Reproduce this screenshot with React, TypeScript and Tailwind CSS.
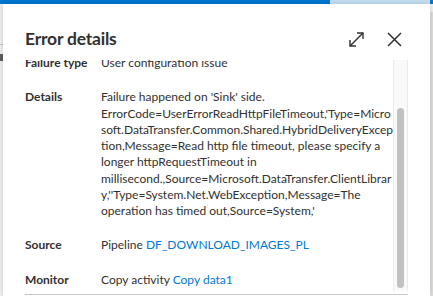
import React from "react";

const font = { fontFamily: 'Lato, "Open Sans", sans-serif' };

function Row({ label, children }: { label: string; children: React.ReactNode }) {
  return (
    <div className="flex">
      <div className="w-[76px] shrink-0 font-bold text-[#323130]">{label}</div>
      <div className="flex-1 text-[#323130]">{children}</div>
    </div>
  );
}

export default function App() {
  const detailLines = [
    "Failure happened on 'Sink' side.",
    "ErrorCode=UserErrorReadHttpFileTimeout,'Type=Micro",
    "soft.DataTransfer.Common.Shared.HybridDeliveryExcep",
    "tion,Message=Read http file timeout, please specify a",
    "longer httpRequestTimeout in",
    "millisecond.,Source=Microsoft.DataTransfer.ClientLibrar",
    "y,''Type=System.Net.WebException,Message=The",
    "operation has timed out,Source=System,'",
  ];
  return (
    <div className="relative w-[433px] h-[296px] overflow-hidden bg-[#f3f2f1]" style={font}>
      {/* page behind */}
      <div className="flex h-[4px]">
        <div className="flex-1 bg-[#0078d4]" />
        <div className="w-[100px] bg-[#c7e0f4]" />
        <div className="w-[3px] bg-[#0078d4]" />
      </div>
      <div className="absolute left-0 top-[44px] w-[3px] h-px bg-[#c8c6c4]" />
      <div className="absolute left-0 top-[54px] w-[3px] h-[7px] bg-[#605e5c]" />
      <div className="absolute right-0 top-[12px] w-[3px] bottom-0 bg-[#e1dfdd]" />

      {/* dialog */}
      <div className="absolute left-[3px] top-[4px] right-[3px] bottom-0 bg-white shadow-[0_0_6px_rgba(0,0,0,0.18)] flex flex-col">
        <div className="flex items-center h-[56px] pl-[22px] pr-[28px] pt-[14px]">
          <div className="flex-1 text-[17.5px] font-bold text-[#323130] tracking-[-0.2px]">Error details</div>
          <svg width="15" height="15" viewBox="0 0 15 15" className="mr-[23px]" fill="none" stroke="#323130" strokeWidth="1.4">
            <path d="M1 14 L14 1" />
            <path d="M8 1 H14 V7" />
            <path d="M1 8 V14 H7" />
          </svg>
          <svg width="15" height="15" viewBox="0 0 15 15" fill="none" stroke="#323130" strokeWidth="1.5">
            <path d="M1 1 L14 14 M14 1 L1 14" />
          </svg>
        </div>
        <div className="relative flex-1 mx-[22px] mb-[1px] border-b border-[#c8c6c4] overflow-hidden">
          <div className="mt-[-5px] flex flex-col gap-[18px] text-[12px] leading-[16.25px] pr-[28px]">
            <Row label="Failure type">User configuration issue</Row>
            <Row label="Details">
              {detailLines.map((l) => (
                <div key={l} className="whitespace-nowrap">{l}</div>
              ))}
            </Row>
            <Row label="Source">
              Pipeline <span className="text-[#0078d4]">DF_DOWNLOAD_IMAGES_PL</span>
            </Row>
            <Row label="Monitor">
              Copy activity <span className="text-[#0078d4]">Copy data1</span>
            </Row>
          </div>
          {/* scrollbar */}
          <div className="absolute right-[0px] top-0 bottom-[3px] w-[15px] bg-[#f9f9f9] border-x border-[#ebebeb]">
            <div className="absolute left-[3px] right-[3px] top-[48px] bottom-[3px] rounded-[4px] bg-[#c1c1c1]" />
          </div>
        </div>
      </div>
    </div>
  );
}
